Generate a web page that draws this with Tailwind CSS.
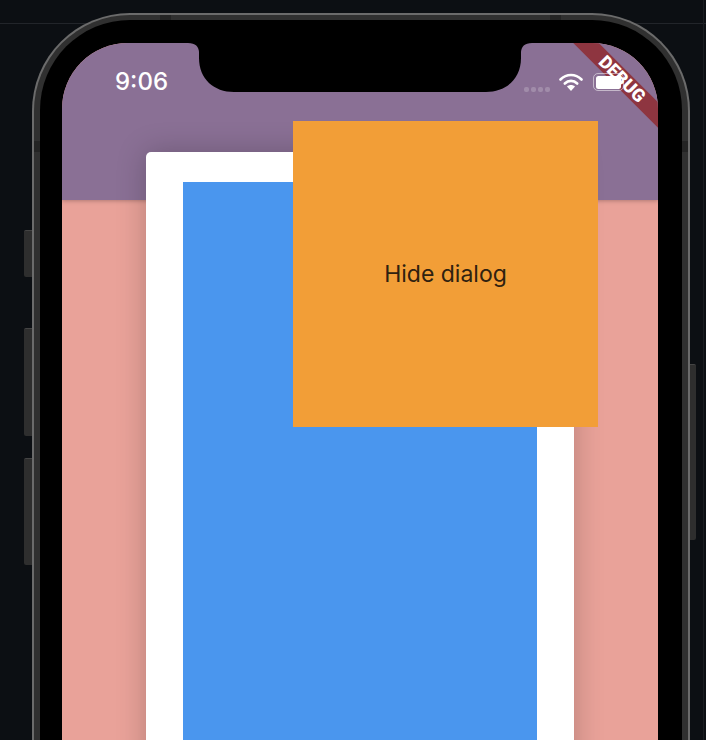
<!DOCTYPE html>
<html lang="en">
<head>
    <meta charset="UTF-8">
    <meta name="viewport" content="width=device-width, initial-scale=1.0">
    <title>Hide dialog</title>
    <script src="https://cdn.jsdelivr.net/npm/@tailwindcss/browser@4"></script>
</head>
<body class="bg-[#0c0f13] h-[740px] overflow-hidden relative font-['Inter',sans-serif]">
    <!-- window lines behind the device -->
    <div class="absolute left-0 right-0 top-[23px] h-px bg-[#22252a]"></div>
    <div class="absolute right-[2px] top-0 bottom-0 w-px bg-[#1a1d21]"></div>

    <!-- side buttons -->
    <div class="absolute left-[24px] top-[230px] w-[10px] h-[47px] rounded-l-[2px] bg-[#2e2e2e] border-t border-[#444]"></div>
    <div class="absolute left-[24px] top-[328px] w-[10px] h-[108px] rounded-l-[2px] bg-[#2e2e2e] border-t border-[#444]"></div>
    <div class="absolute left-[24px] top-[458px] w-[10px] h-[107px] rounded-l-[2px] bg-[#2e2e2e] border-t border-[#444]"></div>
    <div class="absolute left-[688px] top-[364px] w-[8px] h-[176px] rounded-r-[2px] bg-[#2e2e2e] border-t border-[#444]"></div>

    <!-- device frame -->
    <div class="relative ml-[32px] mt-[13px] w-[658px] h-[727px] overflow-hidden rounded-t-[98px] border-2 border-b-0 border-[#6b6b6b] bg-[#303030] pt-[5px] pl-[6px] pr-[6px]">
        <div class="relative h-[760px] rounded-t-[90px] bg-black pt-[23px] pl-[22px] pr-[24px]">
            <div class="relative h-[737px] rounded-t-[66px] overflow-hidden bg-[#e9a299]">
                <!-- app bar -->
                <div class="h-[157px] bg-[#8a7095] shadow-[0_1px_4px_rgba(0,0,0,0.25)] relative">
                    <div class="pl-[53px] pt-[24px] text-white text-[24px] leading-[30px] font-medium">9:06</div>
                </div>

                <!-- dialog card -->
                <div class="absolute left-[84px] top-[109px] w-[428px] h-[640px] bg-white rounded-t-[5px] pt-[30px] px-[37px] shadow-[0_0_30px_rgba(0,0,0,0.22)]">
                    <div class="h-full bg-[#4a96ee]"></div>
                </div>

                <!-- popover -->
                <div class="absolute left-[231px] top-[78px] w-[305px] h-[306px] bg-[#f29e37] flex items-center justify-center">
                    <span class="text-[23px] text-[#2f2110]">Hide dialog</span>
                </div>

                <!-- debug banner -->
                <div class="absolute left-[468px] top-[27px] w-[184px] h-[18px] rotate-45 bg-[#8e3540] flex items-center justify-center">
                    <span class="font-['Roboto',sans-serif] text-[18px] leading-[18px] font-black text-white">DEBUG</span>
                </div>

                <!-- notch -->
                <svg class="absolute left-[126px] top-0" width="344" height="50" viewBox="0 0 344 50">
                    <path d="M0 0 Q11 0 11 10 V15 C11 36 26 49 46 49 H298 C318 49 333 36 333 15 V10 Q333 0 344 0 Z" fill="#000"/>
                </svg>

                <!-- status icons, drawn over the banner -->
                <div class="absolute left-[462px] top-[29px] flex items-center">
                    <div class="flex gap-[2px] mt-[15px]">
                        <div class="w-[5px] h-[5px] rounded-[2px] bg-white/20"></div>
                        <div class="w-[5px] h-[5px] rounded-[2px] bg-white/20"></div>
                        <div class="w-[5px] h-[5px] rounded-[2px] bg-white/20"></div>
                        <div class="w-[5px] h-[5px] rounded-[2px] bg-white/20"></div>
                    </div>
                    <svg class="ml-[9px]" width="24" height="18" viewBox="0 0 24 18">
                        <path d="M1.5 6.5 C7.5 0.5 16.5 0.5 22.5 6.5" fill="none" stroke="#fff" stroke-width="2.6" stroke-linecap="round"/>
                        <path d="M5.8 10.5 C9.3 7 14.7 7 18.2 10.5" fill="none" stroke="#fff" stroke-width="2.6" stroke-linecap="round"/>
                        <path d="M12 18 L8 13.6 C10.2 11.6 13.8 11.6 16 13.6 Z" fill="#fff"/>
                    </svg>
                    <div class="ml-[10px] w-[31px] h-[18px] rounded-[5px] border border-white/50 p-[1.5px]">
                        <div class="h-full w-[25px] rounded-[2.5px] bg-white"></div>
                    </div>
                </div>
            </div>
        </div>
    </div>

    <!-- antenna bands on the frame -->
    <div class="absolute left-[160px] top-[15px] w-[11px] h-[5px] bg-[#242424]"></div>
    <div class="absolute left-[550px] top-[15px] w-[11px] h-[5px] bg-[#242424]"></div>
    <div class="absolute left-[34px] top-[141px] w-[6px] h-[11px] bg-[#242424]"></div>
    <div class="absolute left-[682px] top-[141px] w-[6px] h-[11px] bg-[#242424]"></div>
</body>
</html>
